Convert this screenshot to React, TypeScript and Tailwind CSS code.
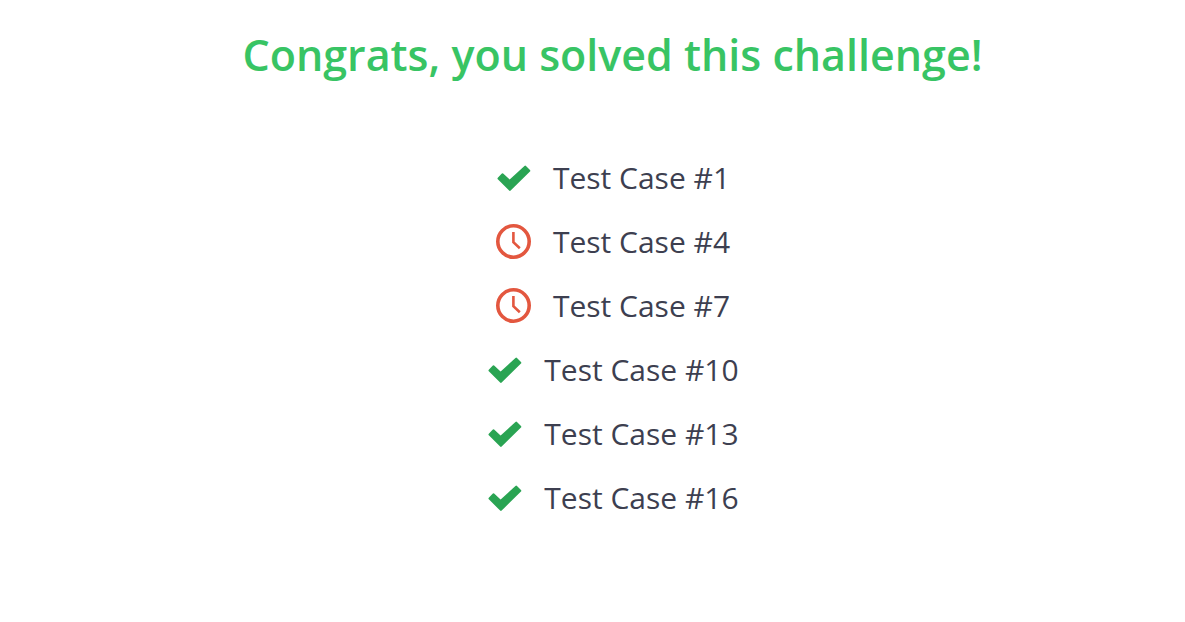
import React from "react";

type Status = "passed" | "timeout";

interface TestCase {
  id: number;
  status: Status;
}

const testCases: TestCase[] = [
  { id: 1, status: "passed" },
  { id: 4, status: "timeout" },
  { id: 7, status: "timeout" },
  { id: 10, status: "passed" },
  { id: 13, status: "passed" },
  { id: 16, status: "passed" },
];

const CheckIcon: React.FC = () => (
  <svg className="h-9 w-9 shrink-0 text-[#2aa453]" viewBox="0 0 36 36" fill="currentColor" stroke="currentColor" aria-hidden="true">
    <path d="M3.6 18.4 7.4 14.4 14.6 21 30.2 6.7 34.2 10.7 14.9 29.8Z" strokeWidth="2.2" strokeLinejoin="round" />
  </svg>
);

const ClockIcon: React.FC = () => (
  <svg className="h-9 w-9 shrink-0 text-[#e3573f]" viewBox="0 0 36 36" fill="none" stroke="currentColor" aria-hidden="true">
    <circle cx="18.5" cy="17.5" r="15.7" strokeWidth="3.6" />
    <path d="M18.4 8v10.3l6.4 6" strokeWidth="2.6" />
  </svg>
);

const App: React.FC = () => {
  return (
    <main className="flex min-h-screen flex-col items-center bg-white pl-10 font-['Open_Sans','Noto_Sans',sans-serif]">
      <h1 className="pt-6 text-center text-[43px] leading-[62px] font-semibold text-[#38c464]">
        Congrats, you solved this challenge!
      </h1>
      <ul className="mt-[60px] flex flex-col items-center">
        {testCases.map(({ id, status }) => (
          <li key={id} className="flex h-16 items-center gap-[22px] text-[30px] text-[#3d3f50]">
            {status === "passed" ? <CheckIcon /> : <ClockIcon />}
            <span className="pb-0.5">Test Case #{id}</span>
          </li>
        ))}
      </ul>
    </main>
  );
};

export default App;
